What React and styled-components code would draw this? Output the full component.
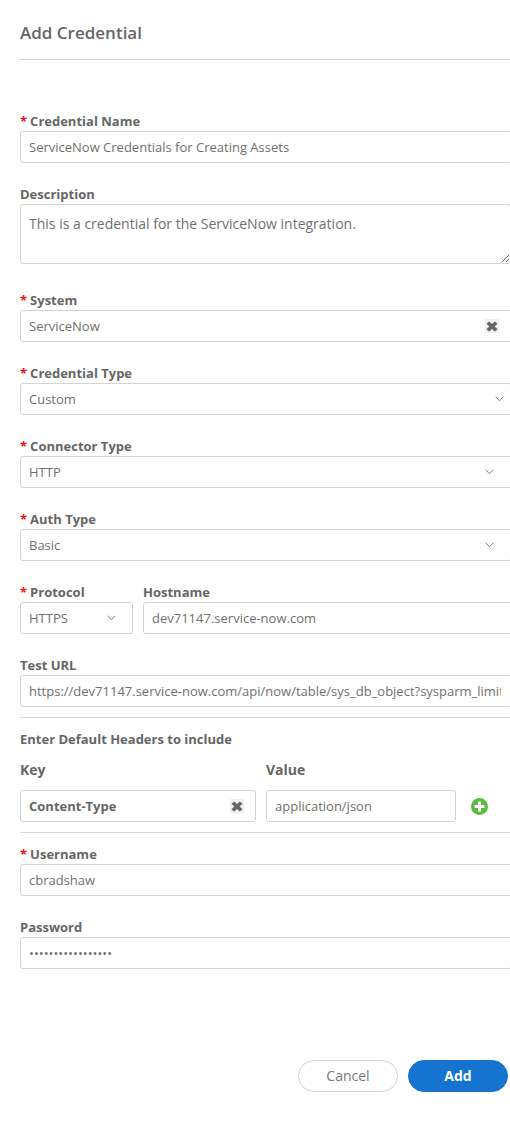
import React from "react";
import styled, { createGlobalStyle } from "styled-components";

const Global = createGlobalStyle`
  html, body { margin: 0; padding: 0; background: #fff; overflow: hidden; }
  body { font-family: "Open Sans", "Liberation Sans", sans-serif; color: #666; }
  * { box-sizing: border-box; }
`;

const Page = styled.div`
  width: 510px;
  height: 1131px;
  overflow: hidden;
  padding-left: 20px;
`;
const Title = styled.h1`
  margin: 0;
  height: 60px;
  padding-top: 21px;
  font-size: 17px;
  line-height: 24px;
  font-weight: 600;
  color: #666;
  border-bottom: 1px solid #d4d4d4;
`;
const Form = styled.div`
  width: 492px;
  padding-top: 50px;
`;
const Field = styled.div`
  margin-bottom: ${p => p.$mb ?? 20}px;
  width: ${p => p.$w || "auto"};
  flex: ${p => p.$flex || "none"};
`;
const Label = styled.label`
  display: block;
  height: 21px;
  padding-top: 1px;
  font-size: ${p => p.$size || 13}px;
  line-height: 21px;
  font-weight: 700;
  color: #666;
  white-space: nowrap;
`;
const Req = styled.span`
  color: #e8111a;
  margin-right: 3px;
`;
const Input = styled.input`
  display: block;
  width: 100%;
  height: 32px;
  padding: 0 10px 0 8px;
  border: 1px solid #d2d2d2;
  border-radius: 3px;
  background: #fff;
  font: 400 13px "Open Sans", sans-serif;
  color: #707070;
  outline: none;
`;
const TextArea = styled.textarea`
  display: block;
  width: 100%;
  height: 60px;
  padding: 8px;
  border: 1px solid #d2d2d2;
  border-radius: 3px;
  background: #fff;
  font: 400 14px/22px "Open Sans", sans-serif;
  color: #707070;
  outline: none;
  resize: vertical;
`;
const TextAreaClip = styled.div`
  width: 491px;
`;
const SelectBox = styled.div`
  display: flex;
  align-items: center;
  justify-content: space-between;
  height: 32px;
  padding: 0 ${p => p.$pr ?? 17}px 0 8px;
  border: 1px solid #d2d2d2;
  border-radius: 3px;
  background: #fff;
  font-size: 13px;
  font-weight: ${p => p.$bold ? 700 : 400};
  color: ${p => p.$bold ? "#666" : "#707070"};
`;
const Clear = styled.span`
  display: flex;
  align-items: center;
  justify-content: center;
  width: 14px;
  height: 14px;
  background: #efefef;
`;
const Row = styled.div`
  display: flex;
  gap: 10px;
`;
const Rule = styled.hr`
  margin: 0;
  border: 0;
  border-top: 1px solid #d8d8d8;
  width: 490px;
`;
const Section = styled.div`
  height: 21px;
  margin-top: 11px;
  font-size: 13px;
  line-height: 21px;
  font-weight: 700;
  color: #666;
`;
const HeaderLabels = styled.div`
  display: flex;
  gap: 10px;
  margin-top: 8px;
  height: 21px;
  margin-bottom: 11px;
`;
const HeaderRow = styled.div`
  display: flex;
  align-items: center;
  gap: 10px;
  height: 32px;
  margin-bottom: 10px;
`;
const KeyCol = styled.div`
  width: 236px;
  flex: none;
`;
const ValueCol = styled.div`
  width: 190px;
  flex: none;
`;
const AddIcon = styled.svg`
  display: block;
  margin-left: 5px;
  margin-top: 1px;
  width: 17px;
  height: 17px;
`;
const Spacer = styled.div`
  height: 10px;
`;
const Footer = styled.div`
  display: flex;
  justify-content: flex-end;
  gap: 10px;
  width: 488px;
  margin-top: 91px;
`;
const Button = styled.button`
  width: 100px;
  height: 32px;
  border-radius: 16px;
  border: 1px solid ${p => p.$primary ? "#1474d0" : "#d2d2d2"};
  background: ${p => p.$primary ? "#1474d0" : "#fff"};
  color: ${p => p.$primary ? "#fff" : "#777"};
  font: ${p => p.$primary ? 700 : 400} 14px "Open Sans", sans-serif;
  padding: 0 0 2px;
`;

const Chevron = () => (
  <svg width="9" height="6" viewBox="0 0 9 6" fill="none">
    <path d="M.7.9 4.5 4.7 8.3.9" stroke="#777" strokeWidth="1" />
  </svg>
);
const XIcon = () => (
  <svg width="12" height="11" viewBox="0 0 10 10" preserveAspectRatio="none">
    <path d="M2.6.4 5 2.8 7.4.4 9.6 2.6 7.2 5l2.4 2.4-2.2 2.2L5 7.2 2.6 9.6.4 7.4 2.8 5 .4 2.6Z" fill="#666" />
  </svg>
);

const F = ({ label, req, children, ...rest }) => (
  <Field {...rest}>
    <Label>{req && <Req>*</Req>}{label}</Label>
    {children}
  </Field>
);

export default function App() {
  return (
    <Page>
      <Global />
      <Title>Add Credential</Title>
      <Form>
        <F label="Credential Name" req><Input readOnly value="ServiceNow Credentials for Creating Assets" /></F>
        <F label="Description" $mb={25}>
          <TextAreaClip>
            <TextArea readOnly value="This is a credential for the ServiceNow integration." />
          </TextAreaClip>
        </F>
        <F label="System" req><SelectBox $pr={12}>ServiceNow<Clear><XIcon /></Clear></SelectBox></F>
        <F label="Credential Type" req><SelectBox $pr={7}>Custom<Chevron /></SelectBox></F>
        <F label="Connector Type" req><SelectBox>HTTP<Chevron /></SelectBox></F>
        <F label="Auth Type" req><SelectBox>Basic<Chevron /></SelectBox></F>
        <Row>
          <F label="Protocol" req $w="113px"><SelectBox $pr={16}>HTTPS<Chevron /></SelectBox></F>
          <F label="Hostname" $flex="1"><Input readOnly value="dev71147.service-now.com" /></F>
        </Row>
        <F label="Test URL" $mb={10}><Input readOnly value="https://dev71147.service-now.com/api/now/table/sys_db_object?sysparm_limit=1" /></F>
        <Rule />
        <Section>Enter Default Headers to include</Section>
        <HeaderLabels>
          <KeyCol><Label $size={14}>Key</Label></KeyCol>
          <ValueCol><Label $size={14}>Value</Label></ValueCol>
        </HeaderLabels>
        <HeaderRow>
          <KeyCol><SelectBox $bold $pr={11}>Content-Type<Clear><XIcon /></Clear></SelectBox></KeyCol>
          <ValueCol><Input readOnly value="application/json" /></ValueCol>
          <AddIcon viewBox="0 0 18 18">
            <circle cx="9" cy="9" r="9" fill="#5cb947" />
            <path d="M7.4 3.8h3.2v3.6h3.6v3.2h-3.6v3.6H7.4v-3.6H3.8V7.4h3.6Z" fill="#fff" />
          </AddIcon>
        </HeaderRow>
        <Rule />
        <Spacer />
        <F label="Username" req><Input readOnly value="cbradshaw" /></F>
        <F label="Password" $mb={0}><Input readOnly type="password" value="aaaaaaaaaaaaaaaaa" /></F>
        <Footer>
          <Button>Cancel</Button>
          <Button $primary>Add</Button>
        </Footer>
      </Form>
    </Page>
  );
}
